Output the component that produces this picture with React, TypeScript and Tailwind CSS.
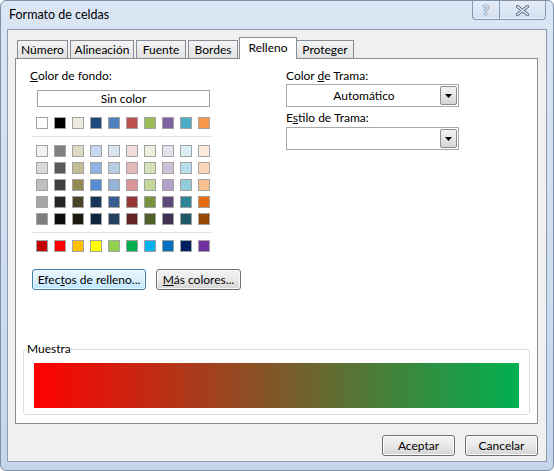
import React from 'react'

const themeRow = ['#FFFFFF', '#000000', '#EEECE1', '#1F497D', '#4F81BD', '#C0504D', '#9BBB59', '#8064A2', '#4BACC6', '#F79646']

const tintRows = [
    ['#F2F2F2', '#7F7F7F', '#DDD9C3', '#C6D9F0', '#DBE5F1', '#F2DCDB', '#EBF1DD', '#E5E0EC', '#DBEEF3', '#FDEADA'],
    ['#D8D8D8', '#595959', '#C4BD97', '#8DB3E2', '#B8CCE4', '#E5B9B7', '#D7E3BC', '#CCC1D9', '#B7DDE8', '#FBD5B5'],
    ['#BFBFBF', '#3F3F3F', '#938953', '#548DD4', '#95B3D7', '#D99694', '#C3D69B', '#B2A2C7', '#92CDDC', '#FAC08F'],
    ['#A5A5A5', '#262626', '#494429', '#17365D', '#366092', '#953734', '#76923C', '#5F497A', '#31859B', '#E36C09'],
    ['#7F7F7F', '#0C0C0C', '#1D1B10', '#0F243E', '#244061', '#632423', '#4F6128', '#3F3151', '#205867', '#974806'],
]

const standardRow = ['#C00000', '#FF0000', '#FFC000', '#FFFF00', '#92D050', '#00B050', '#00B0F0', '#0070C0', '#002060', '#7030A0']

const tabs = [
    { label: 'Número', w: 'w-[51px]' },
    { label: 'Alineación', w: 'w-[64px]' },
    { label: 'Fuente', w: 'w-[50px]' },
    { label: 'Bordes', w: 'w-[50px]' },
    { label: 'Relleno', w: 'w-[58px]', active: true },
    { label: 'Proteger', w: 'w-[58px]' },
]

function Swatch({ color }: { color: string }) {
    return <div className="h-[12px] w-[12px] border border-[#a3a3a3]" style={{ background: color }} />
}

function SwatchRow({ colors }: { colors: string[] }) {
    return (
        <div className="flex gap-[6px]">
            {colors.map((c, i) => (
                <Swatch key={i} color={c} />
            ))}
        </div>
    )
}

function Separator() {
    return <div className="ml-[2px] h-px w-[180px] bg-[#e3e3e3]" />
}

function ComboBox({ value }: { value?: string }) {
    return (
        <div className="flex h-[23px] w-[173px] items-start border border-[#a9a9a9] bg-white p-px">
            <div className="flex h-[19px] flex-1 items-center justify-center">{value}</div>
            <div className="flex h-[19px] w-[17px] items-center justify-center rounded-[2px] border border-[#8d8d8d] bg-gradient-to-b from-[#f4f4f4] to-[#d6d6d6]">
                <svg width="7" height="4" viewBox="0 0 7 4">
                    <path d="M0 0h7L3.5 4z" fill="#000" />
                </svg>
            </div>
        </div>
    )
}

function DialogButton({ children, className }: { children: React.ReactNode; className?: string }) {
    return (
        <div
            className={
                'flex h-[21px] items-center justify-center rounded-[3px] border border-[#707070] bg-gradient-to-b from-[#f3f3f3] via-[#e9e9e9] to-[#d4d4d4] shadow-[inset_0_0_0_1px_#fbfbfb] ' +
                (className ?? '')
            }
        >
            {children}
        </div>
    )
}

export default function App() {
    return (
        <div className="flex h-[471px] w-[554px] flex-col overflow-hidden rounded-[6px] border border-[#7e8fa8] bg-gradient-to-b from-[#dbe6f4] to-[#c5d6ec] font-['Lato',sans-serif] text-[12px] leading-[14px] text-black">
            {/* title bar */}
            <div className="flex h-[28px] items-start">
                <span className="pl-[8px] pt-[7px] text-[12.5px] text-black">Formato de celdas</span>
                <div className="ml-auto mr-[7px] flex h-[19px] rounded-b-[4px] border border-t-0 border-[#8596b0] bg-gradient-to-b from-[#e4ecf7] to-[#d3e0f0] shadow-[inset_0_-1px_0_#eef3fa]">
                    <div className="flex w-[27px] items-center justify-center border-r border-[#8596b0] text-[13px] font-bold leading-none text-[#e9eff8] [text-shadow:0_0_1px_#51627c,0_0_1px_#51627c,0_0_1px_#51627c]">
                        ?
                    </div>
                    <div className="flex w-[45px] items-center justify-center">
                        <svg width="13" height="11" viewBox="0 0 13 11">
                            <path d="M1.5 1.5l10 8M11.5 1.5l-10 8" stroke="#5a6b85" strokeWidth="3.2" strokeLinecap="round" />
                            <path d="M1.5 1.5l10 8M11.5 1.5l-10 8" stroke="#eef3fa" strokeWidth="1.4" strokeLinecap="round" />
                        </svg>
                    </div>
                </div>
            </div>

            {/* client area */}
            <div className="mx-[6px] mb-[8px] flex flex-1 flex-col border border-[#8d9bb0] bg-[#f0f0f0] pl-[7px] pr-[8px] pt-[7px]">
                {/* tabs */}
                <div className="relative z-10 flex h-[21px] items-end pl-[2px]">
                    {tabs.map((t) =>
                        t.active ? (
                            <div
                                key={t.label}
                                className={
                                    t.w +
                                    ' -mx-px -mb-px flex h-[22px] items-start justify-center border border-b-0 border-[#898c95] bg-white pt-[3px]'
                                }
                            >
                                {t.label}
                            </div>
                        ) : (
                            <div
                                key={t.label}
                                className={
                                    t.w +
                                    ' mr-[2px] flex h-[18px] items-center justify-center border border-b-0 border-[#898c95] bg-gradient-to-b from-[#f3f3f3] to-[#e3e3e3]'
                                }
                            >
                                {t.label}
                            </div>
                        )
                    )}
                </div>

                {/* panel */}
                <div className="flex h-[366px] flex-col border border-[#898c95] bg-white">
                    <div className="flex pt-[10px]">
                        {/* left column */}
                        <div className="flex w-[270px] flex-col pl-[14px]">
                            <div>
                                <span className="underline">C</span>olor de fondo:
                            </div>
                            <div className="ml-[7px] mt-[7px] flex h-[17px] w-[173px] items-center justify-center border border-[#a0a0a0]">
                                Sin color
                            </div>
                            <div className="ml-[6px] mt-[10px]">
                                <SwatchRow colors={themeRow} />
                            </div>
                            <div className="mt-[7px]">
                                <Separator />
                            </div>
                            <div className="ml-[6px] mt-[8px] flex flex-col gap-[5px]">
                                {tintRows.map((row, i) => (
                                    <SwatchRow key={i} colors={row} />
                                ))}
                            </div>
                            <div className="mt-[7px]">
                                <Separator />
                            </div>
                            <div className="ml-[6px] mt-[7px]">
                                <SwatchRow colors={standardRow} />
                            </div>
                            <div className="ml-[2px] mt-[17px] flex gap-[10px]">
                                <div className="flex h-[21px] w-[114px] items-center justify-center rounded-[3px] border border-[#3c7fb1] bg-gradient-to-b from-[#eaf6fd] via-[#d9f0fc] to-[#bee6fd] shadow-[inset_0_0_0_1px_#f4fbfe]">
                                    <span>
                                        Efec<span className="underline">t</span>os de relleno...
                                    </span>
                                </div>
                                <DialogButton className="w-[85px]">
                                    <span>
                                        <span className="underline">M</span>ás colores...
                                    </span>
                                </DialogButton>
                            </div>
                        </div>

                        {/* right column */}
                        <div className="flex flex-col">
                            <div>
                                Color <span className="underline">d</span>e Trama:
                            </div>
                            <div className="mt-px">
                                <ComboBox value="Automático" />
                            </div>
                            <div className="mt-[4px]">
                                E<span className="underline">s</span>tilo de Trama:
                            </div>
                            <div className="mt-[2px]">
                                <ComboBox />
                            </div>
                        </div>
                    </div>

                    {/* sample */}
                    <fieldset className="mx-[7px] mb-[8px] mt-auto rounded-[3px] border border-[#d5dfe5] pb-[6px]">
                        <legend className="ml-[3px] leading-[12px]">Muestra</legend>
                        <div className="mx-[10px] mt-[8px] h-[45px] bg-[linear-gradient(to_right,#ff0000,#00b050)]" />
                    </fieldset>
                </div>

                {/* dialog buttons */}
                <div className="mt-[11px] flex justify-end gap-[10px]">
                    <DialogButton className="w-[73px]">Aceptar</DialogButton>
                    <DialogButton className="w-[73px]">Cancelar</DialogButton>
                </div>
            </div>
        </div>
    )
}
